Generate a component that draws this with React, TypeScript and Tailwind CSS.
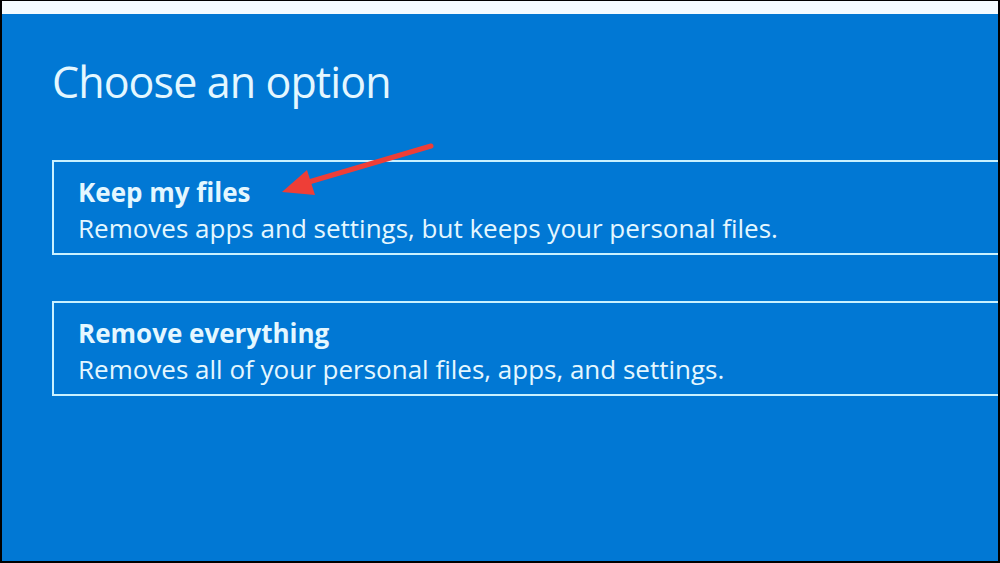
const options = [
  {
    title: "Keep my files",
    text: "Removes apps and settings, but keeps your personal files.",
  },
  {
    title: "Remove everything",
    text: "Removes all of your personal files, apps, and settings.",
  },
];

function Arrow() {
  return (
    <svg
      className="pointer-events-none absolute left-0 top-0"
      width="1000"
      height="563"
      viewBox="0 0 1000 563"
    >
      <line x1="429" y1="145" x2="300" y2="183" stroke="#ee3e37" strokeWidth="5" strokeLinecap="round" />
      <polygon points="280,191 305,169 313,194" fill="#ee3e37" />
    </svg>
  );
}

export default function App() {
  return (
    <div
      className="relative flex h-[563px] w-[1000px] flex-col overflow-hidden border-2 border-t border-black bg-[#0178d4]"
      style={{ fontFamily: '"Open Sans", "Noto Sans", sans-serif' }}
    >
      <div className="h-[13px] shrink-0 bg-[#f4fbff]" />
      <div className="flex flex-col pl-[50px] pt-[42px] text-[#e4f7ff]">
        <h1 className="text-[43px] font-normal leading-[52px] tracking-[-0.9px]">Choose an option</h1>
        <div className="mt-[52px] flex flex-col gap-[46px]">
          {options.map((option) => (
            <div
              key={option.title}
              className="h-[95px] border-2 border-r-0 border-[#c9f1ff] pl-[24px] pt-[13px]"
            >
              <div className="text-[26px] font-bold leading-[34px]">{option.title}</div>
              <div className="text-[26px] leading-[39px]">{option.text}</div>
            </div>
          ))}
        </div>
      </div>
      <Arrow />
    </div>
  );
}
